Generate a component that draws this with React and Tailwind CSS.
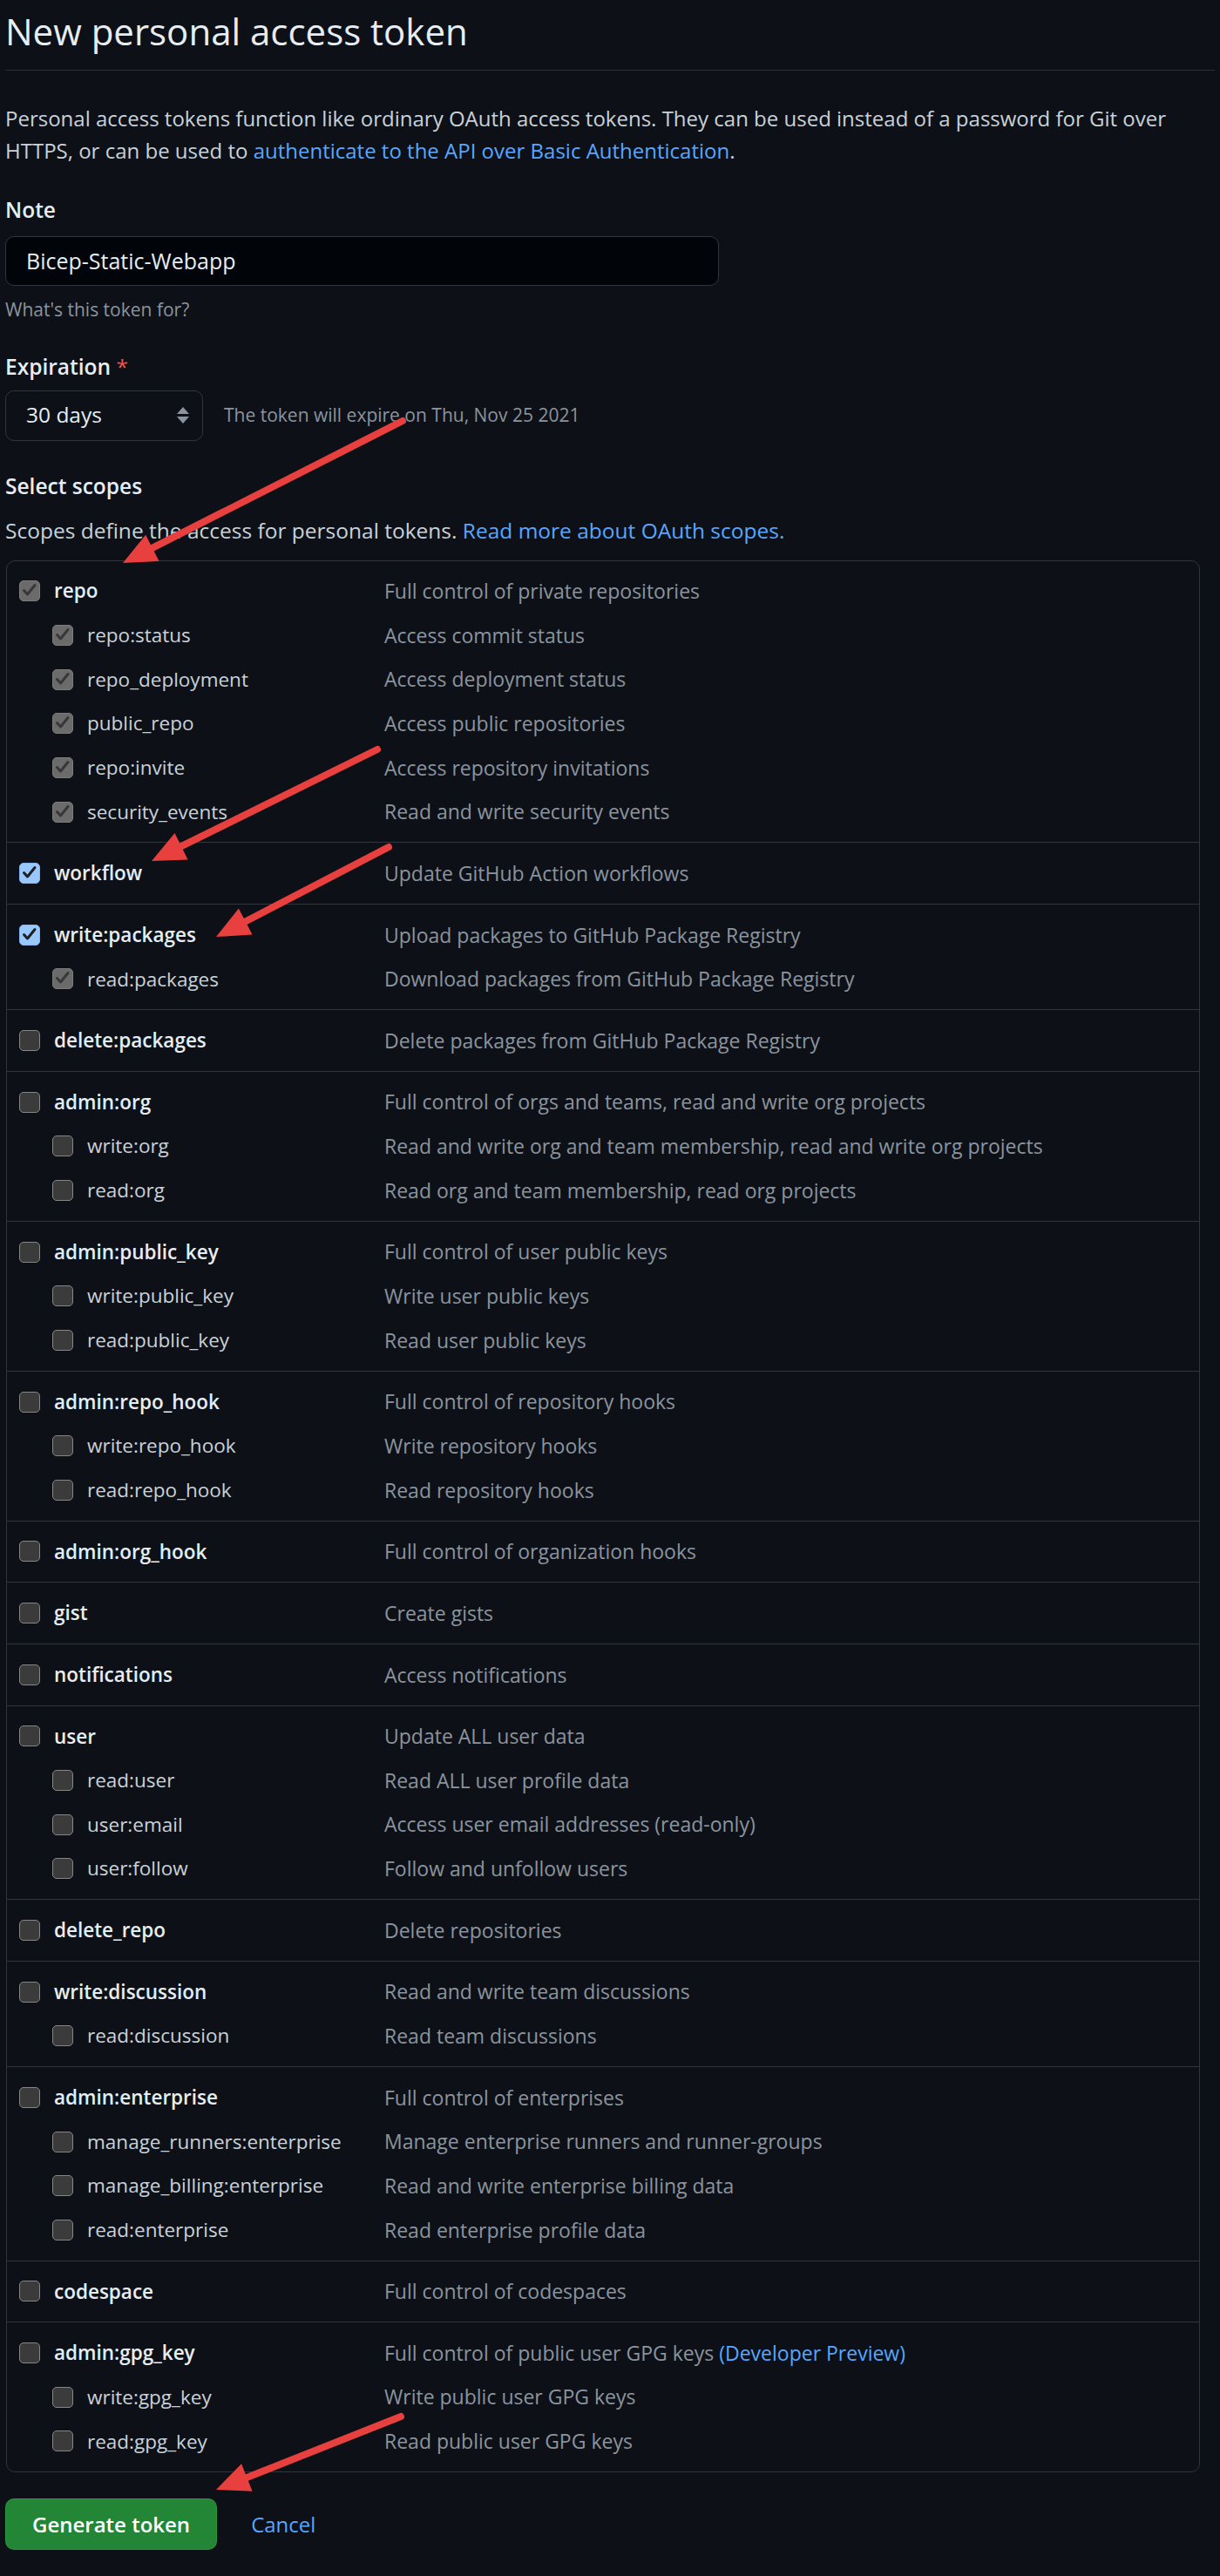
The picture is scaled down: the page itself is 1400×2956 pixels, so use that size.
import React from "react";

const scopes = [
  {
    name: "repo",
    desc: "Full control of private repositories",
    state: "locked",
    childState: "locked",
    children: [
      ["repo:status", "Access commit status"],
      ["repo_deployment", "Access deployment status"],
      ["public_repo", "Access public repositories"],
      ["repo:invite", "Access repository invitations"],
      ["security_events", "Read and write security events"],
    ],
  },
  { name: "workflow", desc: "Update GitHub Action workflows", state: "checked" },
  {
    name: "write:packages",
    desc: "Upload packages to GitHub Package Registry",
    state: "checked",
    childState: "locked",
    children: [["read:packages", "Download packages from GitHub Package Registry"]],
  },
  { name: "delete:packages", desc: "Delete packages from GitHub Package Registry" },
  {
    name: "admin:org",
    desc: "Full control of orgs and teams, read and write org projects",
    children: [
      ["write:org", "Read and write org and team membership, read and write org projects"],
      ["read:org", "Read org and team membership, read org projects"],
    ],
  },
  {
    name: "admin:public_key",
    desc: "Full control of user public keys",
    children: [
      ["write:public_key", "Write user public keys"],
      ["read:public_key", "Read user public keys"],
    ],
  },
  {
    name: "admin:repo_hook",
    desc: "Full control of repository hooks",
    children: [
      ["write:repo_hook", "Write repository hooks"],
      ["read:repo_hook", "Read repository hooks"],
    ],
  },
  { name: "admin:org_hook", desc: "Full control of organization hooks" },
  { name: "gist", desc: "Create gists" },
  { name: "notifications", desc: "Access notifications" },
  {
    name: "user",
    desc: "Update ALL user data",
    children: [
      ["read:user", "Read ALL user profile data"],
      ["user:email", "Access user email addresses (read-only)"],
      ["user:follow", "Follow and unfollow users"],
    ],
  },
  { name: "delete_repo", desc: "Delete repositories" },
  {
    name: "write:discussion",
    desc: "Read and write team discussions",
    children: [["read:discussion", "Read team discussions"]],
  },
  {
    name: "admin:enterprise",
    desc: "Full control of enterprises",
    children: [
      ["manage_runners:enterprise", "Manage enterprise runners and runner-groups"],
      ["manage_billing:enterprise", "Read and write enterprise billing data"],
      ["read:enterprise", "Read enterprise profile data"],
    ],
  },
  { name: "codespace", desc: "Full control of codespaces" },
  {
    name: "admin:gpg_key",
    desc: "Full control of public user GPG keys",
    preview: true,
    children: [
      ["write:gpg_key", "Write public user GPG keys"],
      ["read:gpg_key", "Read public user GPG keys"],
    ],
  },
];

// annotation arrows: [tailX, tailY, tipX, tipY]
const arrows = [
  [462, 483, 141, 646],
  [433, 860, 174, 988],
  [446, 972, 248, 1075],
  [460, 2773, 248, 2857],
];

function Checkbox({ state }) {
  const styles = {
    locked: "bg-[#6b6b6b] border-[#7c7c7c]",
    checked: "bg-[#99c8ff] border-[#86b4ec]",
    off: "bg-[#3b3b3b] border-[#868686]",
  };
  const checked = state === "locked" || state === "checked";
  return (
    <span className={`w-6 h-6 shrink-0 rounded-[5px] border flex ${styles[state || "off"]}`}>
      {checked && (
        <svg viewBox="0 0 22 22" className="w-full h-full">
          <path
            d="M4.5 10.5 L8.5 15 L17 4.5"
            fill="none"
            stroke={state === "checked" ? "#1d2126" : "#383838"}
            strokeWidth="3"
            strokeLinecap="round"
            strokeLinejoin="round"
          />
        </svg>
      )}
    </span>
  );
}

function ScopeRow({ name, desc, state, sub, preview }) {
  return (
    <div className="flex items-center h-[50.65px]">
      <div className={`flex items-center gap-4 w-[433px] shrink-0 ${sub ? "pl-[52px]" : "pl-[14px]"}`}>
        <Checkbox state={state} />
        <span className={sub ? "text-[22.5px] text-[#c9d1d9]" : "text-[22.5px] font-semibold text-[#e6edf3]"}>
          {name}
        </span>
      </div>
      <span className="text-[#8b949e]">
        {desc}
        {preview && <span className="text-[#58a6ff]"> (Developer Preview)</span>}
      </span>
    </div>
  );
}

function Arrow({ a }) {
  const [x1, y1, x2, y2] = a;
  const dx = x2 - x1;
  const dy = y2 - y1;
  const len = Math.hypot(dx, dy);
  const ux = dx / len;
  const uy = dy / len;
  const headLen = 38;
  const half = 17;
  const bx = x2 - ux * headLen;
  const by = y2 - uy * headLen;
  const p1 = `${x2},${y2}`;
  const p2 = `${bx - uy * half},${by + ux * half}`;
  const p3 = `${bx + uy * half},${by - ux * half}`;
  return (
    <g>
      <line
        x1={x1}
        y1={y1}
        x2={bx + ux * 4}
        y2={by + uy * 4}
        stroke="#e8403e"
        strokeWidth="8"
        strokeLinecap="round"
      />
      <polygon points={`${p1} ${p2} ${p3}`} fill="#e8403e" />
    </g>
  );
}

export default function App() {
  return (
    <div className="relative min-h-[2956px] bg-[#0d1117] text-[#c9d1d9] text-[23px] font-['Open_Sans',sans-serif] pl-[6px] pb-[29px]">
      {/* header */}
      <div className="w-[1388px] pt-[10px] pb-[18px] border-b border-[#2b3036]">
        <h1 className="text-[42px] leading-[52px] font-normal text-[#e6edf3]">New personal access token</h1>
      </div>

      <div className="w-[1371px]">
        <p className="mt-[36px] text-[24px] leading-[37px] whitespace-nowrap">
          Personal access tokens function like ordinary OAuth access tokens. They can be used instead of a password for Git over
          <br />
          HTTPS, or can be used to <a className="text-[#58a6ff]">authenticate to the API over Basic Authentication</a>.
        </p>

        {/* Note */}
        <div className="mt-[31px] text-[24.5px] leading-[37px] font-semibold text-[#e6edf3]">Note</div>
        <div className="mt-[12px] w-[819px] h-[57px] rounded-[10px] border border-[#30363d] bg-[#010409] flex items-center pl-[23px] text-[25px] text-[#e6edf3]">
          Bicep-Static-Webapp
        </div>
        <div className="mt-[11.5px] text-[21px] leading-[31px] text-[#8b949e]">What's this token for?</div>

        {/* Expiration */}
        <div className="mt-[31px] text-[24.5px] leading-[37px] font-semibold text-[#e6edf3]">
          Expiration <span className="text-[#f85149] font-normal align-top">*</span>
        </div>
        <div className="mt-[9px] flex items-center gap-6">
          <div className="w-[227px] h-[58px] rounded-[10px] border border-[#30363d] flex items-center justify-between pl-[23px] pr-[15px] text-[24.5px] text-[#e6edf3]">
            <span>30 days</span>
            <svg width="14" height="20" viewBox="0 0 14 20">
              <path d="M7 0 L14 8 L0 8 Z" fill="#8b949e" />
              <path d="M0 11 L14 11 L7 19 Z" fill="#8b949e" />
            </svg>
          </div>
          <span className="text-[21px] text-[#8b949e]">The token will expire on Thu, Nov 25 2021</span>
        </div>

        {/* Scopes */}
        <div className="mt-[33px] text-[24.5px] leading-[37px] font-semibold text-[#e6edf3]">Select scopes</div>
        <p className="mt-[14px] text-[24.5px] leading-[37px]">
          Scopes define the access for personal tokens.{" "}
          <a className="text-[#58a6ff]">Read more about OAuth scopes.</a>
        </p>

        <div className="mt-[16px] ml-[1px] border border-[#30363d] rounded-[10px] divide-y divide-[#30363d]">
          {scopes.map((s) => (
            <div key={s.name} className="py-[9.5px]">
              <ScopeRow name={s.name} desc={s.desc} state={s.state} preview={s.preview} />
              {(s.children || []).map(([n, d]) => (
                <ScopeRow key={n} name={n} desc={d} state={s.childState} sub />
              ))}
            </div>
          ))}
        </div>

        <div className="mt-[30px] flex items-center gap-[39px]">
          <button className="h-[59px] px-[30px] rounded-[10px] bg-[#238636] border border-[#2ea043]/60 text-[24px] text-white font-semibold">
            Generate token
          </button>
          <a className="text-[24px] text-[#58a6ff]">Cancel</a>
        </div>
      </div>

      {/* annotation arrows */}
      <svg
        className="absolute top-0 left-0 w-[1400px] h-[2956px] pointer-events-none"
        viewBox="0 0 1400 2956"
      >
        {arrows.map((a, i) => (
          <Arrow key={i} a={a} />
        ))}
      </svg>
    </div>
  );
}
